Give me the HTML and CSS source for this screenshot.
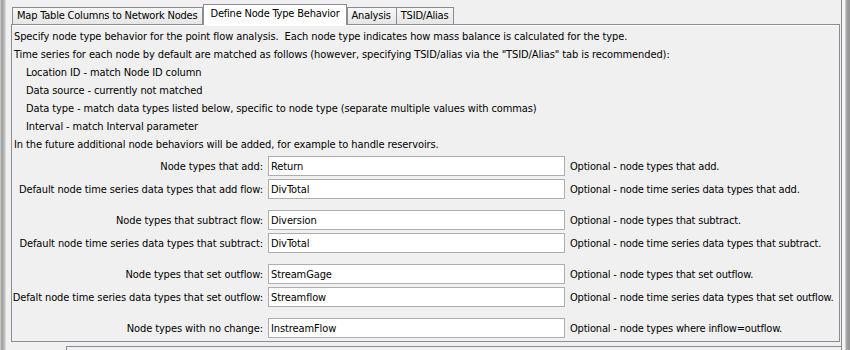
FILE: index.html
```html
<!DOCTYPE html>
<html>
<head>
    <title>Define Node Type Behavior</title>
    <link rel="stylesheet" href="styles.css">
</head>
<body>
    <div class="window">
        <div class="splitter"></div>

        <div class="main">
            <div class="tabs">
                <div class="tab">Map Table Columns to Network Nodes</div>
                <div class="tab selected">Define Node Type Behavior</div>
                <div class="tab">Analysis</div>
                <div class="tab">TSID/Alias</div>
            </div>

            <div class="panel">
                <div class="notes">
                    <div>Specify node type behavior for the point flow analysis.&nbsp; Each node type indicates how mass balance is calculated for the type.</div>
                    <div>Time series for each node by default are matched as follows (however, specifying TSID/alias via the "TSID/Alias" tab is recommended):</div>
                    <div class="indent">Location ID - match Node ID column</div>
                    <div class="indent">Data source - currently not matched</div>
                    <div class="indent">Data type - match data types listed below, specific to node type (separate multiple values with commas)</div>
                    <div class="indent">Interval - match Interval parameter</div>
                    <div>In the future additional node behaviors will be added, for example to handle reservoirs.</div>
                </div>

                <div class="form">
                    <label for="addTypes">Node types that add:</label>
                    <input type="text" id="addTypes" value="Return">
                    <span class="hint">Optional - node types that add.</span>

                    <label for="addData">Default node time series data types that add flow:</label>
                    <input type="text" id="addData" value="DivTotal">
                    <span class="hint">Optional - node time series data types that add.</span>

                    <label for="subTypes" class="group">Node types that subtract flow:</label>
                    <input type="text" id="subTypes" class="group" value="Diversion">
                    <span class="hint group">Optional - node types that subtract.</span>

                    <label for="subData">Default node time series data types that subtract:</label>
                    <input type="text" id="subData" value="DivTotal">
                    <span class="hint">Optional - node time series data types that subtract.</span>

                    <label for="setTypes" class="group">Node types that set outflow:</label>
                    <input type="text" id="setTypes" class="group" value="StreamGage">
                    <span class="hint group">Optional - node types that set outflow.</span>

                    <label for="setData">Defalt node time series data types that set outflow:</label>
                    <input type="text" id="setData" value="Streamflow">
                    <span class="hint">Optional - node time series data types that set outflow.</span>

                    <label for="noChange" class="group">Node types with no change:</label>
                    <input type="text" id="noChange" class="group" value="InstreamFlow">
                    <span class="hint group">Optional - node types where inflow=outflow.</span>
                </div>
            </div>

            <div class="bottom">
                <div class="bottom-box"></div>
            </div>
        </div>

        <div class="scroll"></div>
    </div>
</body>
</html>
```

FILE: styles.css
```css
body {
    margin: 0;
    background-color: #f0f0f0;
    font-family: "DejaVu Sans Condensed", "DejaVu Sans", sans-serif;
    font-size: 11px;
    letter-spacing: -0.1px;
    color: #000;
    overflow: hidden;
}

.window {
    display: flex;
    height: 350px;
}

.splitter {
    width: 6px;
    background: linear-gradient(to right, #d4d4d4 0, #9a9a9a 2px, #b8b8b8 4px, #e4e4e4 6px);
}

.main {
    width: 836px;
    padding-left: 5px;
}

.scroll {
    width: 8px;
    border-left: 1px solid #8c8c8c;
    background: linear-gradient(to right, #f4f4f4 0, #f4f4f4 3px, #a8a8a8 4px, #909090 8px);
}

.tabs {
    display: flex;
    align-items: flex-end;
    height: 20px;
    margin-top: 4px;
    padding-left: 1px;
}

.tab {
    height: 16px;
    line-height: 16px;
    padding: 0 5px 0 4px;
    letter-spacing: -0.2px;
    border: 1px solid #898c95;
    border-bottom: none;
    margin-right: -1px;
    background: linear-gradient(to bottom, #f7f7f7, #e6e6e6);
}

.tab.selected {
    height: 20px;
    line-height: 18px;
    padding: 0 6px;
    background-color: #fff;
    background-image: none;
    position: relative;
    z-index: 1;
    margin-bottom: -1px;
    margin-left: 1px;
    margin-right: 0;
}

.panel {
    width: 825px;
    height: 313px;
    border: 1px solid #898c95;
    box-shadow: inset 0 1px 0 #fff;
    padding: 3px 0 0 2px;
}

.notes div {
    height: 18px;
    line-height: 18px;
    white-space: nowrap;
}

.notes .indent {
    padding-left: 12px;
}

.form {
    display: grid;
    grid-template-columns: 249px 297px auto;
    column-gap: 5px;
    row-gap: 3px;
    margin-top: 2px;
    align-items: center;
}

.form label {
    display: flex;
    justify-content: flex-end;
    white-space: nowrap;
}

.form input {
    box-sizing: border-box;
    height: 20px;
    margin: 0;
    padding: 0 2px;
    border: 1px solid #abadb3;
    background-color: #fff;
    font-family: inherit;
    font-size: 11px;
    letter-spacing: -0.1px;
    color: #000;
}

.form .group {
    margin-top: 8px;
}

.hint {
    white-space: nowrap;
    letter-spacing: -0.18px;
}

.bottom {
    padding: 4px 0 0 55px;
}

.bottom-box {
    height: 10px;
    border-top: 1px solid #898c95;
    border-left: 1px solid #898c95;
    background-color: #f0f0f0;
    margin-right: -5px;
}
```
